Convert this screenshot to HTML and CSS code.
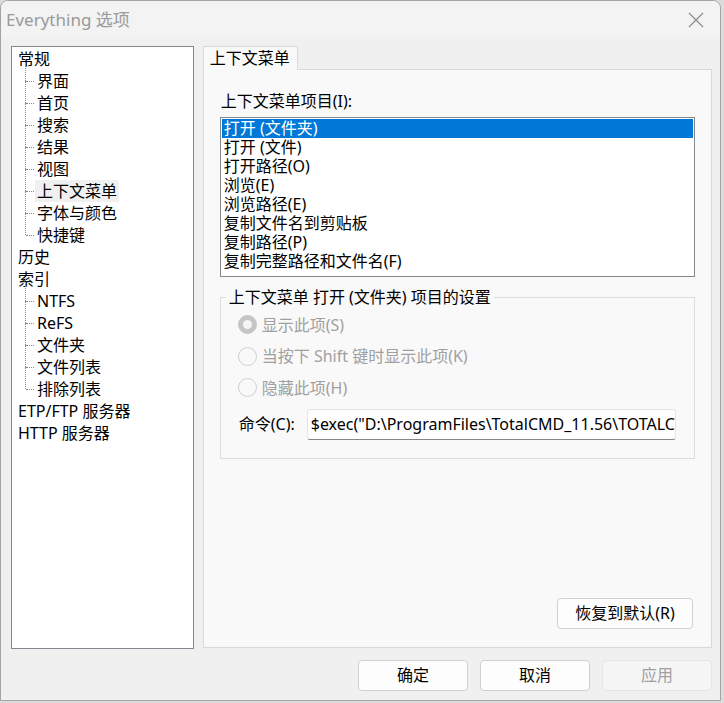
FILE: index.html
```html
<!DOCTYPE html>
<html lang="zh-CN">
<head>
<meta charset="utf-8">
<title>Everything 选项</title>
<link rel="stylesheet" href="styles.css">
</head>
<body>
<div class="window">
  <div class="titlebar">
    <span class="title">Everything 选项</span>
    <svg class="close" width="16" height="16" viewBox="0 0 16 16"><path d="M1 1L15 15M15 1L1 15" stroke="#8a8a8a" stroke-width="1.2" fill="none"/></svg>
  </div>
  <div class="content">
    <div class="main">
      <ul class="tree">
        <li class="node">常规</li>
        <li class="child"><span>界面</span></li>
        <li class="child"><span>首页</span></li>
        <li class="child"><span>搜索</span></li>
        <li class="child"><span>结果</span></li>
        <li class="child"><span>视图</span></li>
        <li class="child"><span class="sel">上下文菜单</span></li>
        <li class="child"><span>字体与颜色</span></li>
        <li class="child last"><span>快捷键</span></li>
        <li class="node">历史</li>
        <li class="node">索引</li>
        <li class="child"><span>NTFS</span></li>
        <li class="child"><span>ReFS</span></li>
        <li class="child"><span>文件夹</span></li>
        <li class="child"><span>文件列表</span></li>
        <li class="child last"><span>排除列表</span></li>
        <li class="node">ETP/FTP 服务器</li>
        <li class="node">HTTP 服务器</li>
      </ul>
      <div class="tabs">
        <div class="tabbar"><div class="tab">上下文菜单</div></div>
        <div class="panel">
          <div class="label">上下文菜单项目(I):</div>
          <ul class="listbox">
            <li class="selected">打开 (文件夹)</li>
            <li>打开 (文件)</li>
            <li>打开路径(O)</li>
            <li>浏览(E)</li>
            <li>浏览路径(E)</li>
            <li>复制文件名到剪贴板</li>
            <li>复制路径(P)</li>
            <li>复制完整路径和文件名(F)</li>
          </ul>
          <fieldset class="group">
            <legend>上下文菜单 打开 (文件夹) 项目的设置</legend>
            <div class="radio"><span class="dot checked"></span>显示此项(S)</div>
            <div class="radio"><span class="dot"></span>当按下 Shift 键时显示此项(K)</div>
            <div class="radio"><span class="dot"></span>隐藏此项(H)</div>
            <div class="cmd">
              <span class="cmd-label">命令(C):</span>
              <div class="input">$exec("D:\ProgramFiles\TotalCMD_11.56\TOTALCMD64.EXE" /O /T "%1")</div>
            </div>
          </fieldset>
          <div class="restore-row"><button class="btn restore">恢复到默认(R)</button></div>
        </div>
      </div>
    </div>
    <div class="buttons">
      <button class="btn">确定</button>
      <button class="btn">取消</button>
      <button class="btn disabled">应用</button>
    </div>
  </div>
</div>
</body>
</html>
```
FILE: styles.css
```css
* { box-sizing: border-box; }
html, body { margin: 0; padding: 0; }
body {
  width: 724px;
  height: 703px;
  background: #dcdcdc;
  font-family: "Noto Sans", "Noto Sans CJK SC", sans-serif;
  font-size: 16px;
  color: #000;
  overflow: hidden;
}
.window {
  width: 721px;
  height: 701px;
  border: 1px solid #a3a3a3;
  border-radius: 8px 8px 0 0;
  background: #f0f0f0;
  overflow: hidden;
  display: flex;
  flex-direction: column;
}
.titlebar {
  height: 36px;
  background: #f3f3f3;
  display: flex;
  align-items: center;
  justify-content: space-between;
  padding: 0 16px 0 5px;
  flex: none;
}
.title {
  font-size: 17px;
  color: #9a9a9a;
  line-height: 20px;
  padding-top: 2px;
}
.close { margin-top: 1px; }
.content {
  flex: 1;
  display: flex;
  flex-direction: column;
  padding: 9px 8px 0 10px;
}
.main {
  display: flex;
  gap: 9px;
  height: 603px;
}
.tree {
  list-style: none;
  margin: 0;
  padding: 1px 0 0 0;
  width: 183px;
  height: 603px;
  background: #fff;
  border: 1px solid #828790;
}
.tree li {
  height: 22px;
  line-height: 22px;
  white-space: nowrap;
}
.tree .node { padding-left: 6px; }
.tree .child {
  position: relative;
  padding-left: 23px;
}
.tree .child span { padding: 0 2px; display: inline-block; height: 22px; }
.tree .child span.sel { background: #f0f0f0; }
.tree .child::before {
  content: "";
  position: absolute;
  left: 13px;
  top: -11px;
  height: 22px;
  border-left: 1px dotted #8a8a8a;
}
.tree .child::after {
  content: "";
  position: absolute;
  left: 14px;
  top: 11px;
  width: 8px;
  border-top: 1px dotted #8a8a8a;
}
.tabs {
  width: 510px;
  display: flex;
  flex-direction: column;
}
.tabbar { height: 23px; display: flex; }
.tab {
  width: 95px;
  height: 24px;
  background: #f9f9f9;
  border: 1px solid #d9d9d9;
  border-bottom: none;
  padding-left: 6px;
  line-height: 23px;
  position: relative;
  z-index: 1;
}
.panel {
  height: 579px;
  background: #f9f9f9;
  border: 1px solid #d9d9d9;
  padding: 21px 16px 18px 16px;
  display: flex;
  flex-direction: column;
}
.label {
  line-height: 20px;
  padding-left: 1px;
}
.listbox {
  list-style: none;
  margin: 6px 0 0 0;
  padding: 1px 1px;
  height: 160px;
  background: #fff;
  border: 1px solid #828790;
  overflow: hidden;
}
.listbox li {
  height: 19px;
  line-height: 19px;
  padding-left: 2px;
  white-space: nowrap;
}
.listbox li.selected { background: #0078d7; color: #fff; }
.group {
  margin: 10px 0 0 0;
  padding: 0 0 0 16px;
  height: 172px;
  border: 1px solid #dcdcdc;
  min-width: 0;
}
.group legend {
  padding: 0 3px;
  margin-left: -11px;
  line-height: 20px;
}
.radio {
  height: 31.5px;
  display: flex;
  align-items: center;
  color: #a0a0a0;
  line-height: 20px;
}
.radio:first-of-type { margin-top: 2px; }
.dot {
  width: 19px;
  height: 19px;
  border-radius: 50%;
  border: 1px solid #cfcfcf;
  background: #f9f9f9;
  margin-right: 5px;
  margin-left: 1px;
  display: flex;
  align-items: center;
  justify-content: center;
  flex: none;
}
.dot.checked {
  background: #c5c5c5;
  border-color: #c5c5c5;
}
.dot.checked::after {
  content: "";
  width: 9px;
  height: 9px;
  border-radius: 50%;
  background: #f5f5f5;
}
.cmd {
  display: flex;
  align-items: center;
  margin-top: 5px;
}
.cmd-label { width: 70px; flex: none; padding-left: 2px; line-height: 20px; }
.input {
  width: 369px;
  height: 31px;
  flex: none;
  background: #fff;
  border: 1px solid #e5e5e5;
  border-bottom: 1px solid #868686;
  border-radius: 3px;
  padding: 0 0 0 3px;
  line-height: 29px;
  white-space: nowrap;
  overflow: hidden;
}
.restore-row {
  margin-top: auto;
  display: flex;
  justify-content: flex-end;
}
.btn {
  font-family: "Noto Sans", "Noto Sans CJK SC", sans-serif;
  font-size: 16px;
  color: #000;
  height: 31px;
  background: #fdfdfd;
  border: 1px solid #d0d0d0;
  border-radius: 4px;
  padding: 0;
  line-height: 29px;
}
.restore { width: 136px; margin-right: 2px; }
.buttons {
  display: flex;
  justify-content: flex-end;
  gap: 12px;
  margin-top: 11px;
}
.buttons .btn { width: 110px; }
.btn.disabled {
  background: #f5f5f5;
  border-color: #e5e5e5;
  color: #a0a0a0;
}
```
